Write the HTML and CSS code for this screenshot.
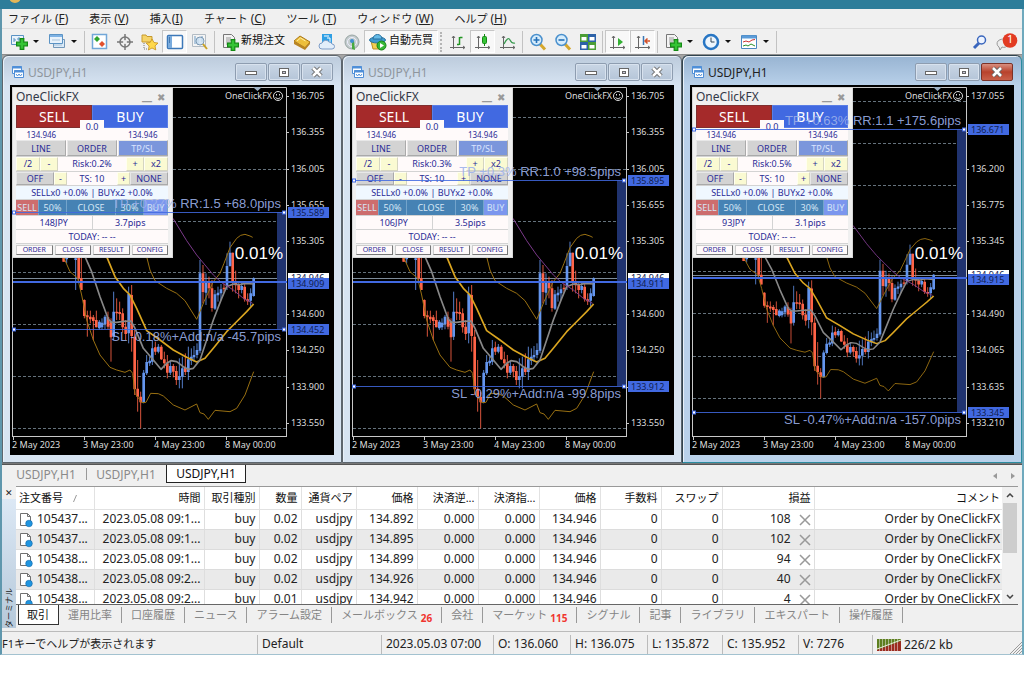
FILE: index.html
```html
<!DOCTYPE html>
<html lang="ja">
<head>
<meta charset="utf-8">
<title>USDJPY,H1</title>
<link rel="stylesheet" href="styles.css">
</head>
<body>
<svg class="defs" width="0" height="0" aria-hidden="true">
  <defs>
    <symbol id="i-plus" viewBox="0 0 10 10"><path d="M3.500.500h3v3h3v3h-3v3h-3v-3h-3v-3h3z" fill="#35c435" stroke="#138a13"/></symbol>
    <symbol id="i-newchart" viewBox="0 0 18 18"><path d="M1.500 2.500h12v9h-12z" fill="#eaf3fb" stroke="#5b93c4"/><path d="M4 5v4M4 7h2M9 4v4M7 6h4" stroke="#5b93c4"/><use href="#i-plus" x="6" y="5" width="12" height="12"/></symbol>
    <symbol id="i-profiles" viewBox="0 0 18 18"><path d="M5.500 6.500h11v8h-11z" fill="#dcebf8" stroke="#7397b8"/><path d="M1.500 1.500h13v9h-13z" fill="#e8f2fb" stroke="#5b93c4"/><path d="M2 3h12" stroke="#7eb2e4" stroke-width="2"/><path d="M4 7h8M6 12h8" stroke="#a9c3da"/></symbol>
    <symbol id="i-market" viewBox="0 0 18 18"><path d="M1.500 1.500h14v14h-14z" fill="#fff" stroke="#72a7d8" stroke-width="1.500"/><path d="m6 3 3 3-3 3-3-3z" fill="#2fa52f"/><path d="m11 8 3 3-3 3-3-3z" fill="#e2502c"/></symbol>
    <symbol id="i-cross" viewBox="0 0 18 18"><circle cx="9" cy="9" r="5" fill="none" stroke="#777" stroke-width="1.500"/><path d="M9 1v16M1 9h16" stroke="#777" stroke-width="1.500"/><circle cx="9" cy="9" r="2" fill="#eee"/></symbol>
    <symbol id="i-fav" viewBox="0 0 18 18"><path d="M1 3.500V2h4l1 1.500h5V9H1z" fill="#f6d468" stroke="#c69a2e"/><path d="M3 10v6h4" stroke="#777" stroke-dasharray="1 1" fill="none"/><path d="m11 6 2 3.500 4 .6-3 2.800.8 4L11 15l-3.600 2 .7-4-3-2.900 4-.6z" fill="#ffd84a" stroke="#c48f1a" stroke-width=".8"/></symbol>
    <symbol id="i-nav" viewBox="0 0 18 18"><rect x="1.500" y="2.500" width="15" height="13" rx="1" fill="#fff" stroke="#3c78b8" stroke-width="1.500"/><path d="M2 3h4v12H2z" fill="#79abdd"/><path d="M3 5h1M3 7h1M3 9h1" stroke="#184b83"/></symbol>
    <symbol id="i-tester" viewBox="0 0 18 18"><path d="M1.500 1.500h13v12h-13z" fill="#f4f4f4" stroke="#b3bcc4"/><path d="M4 3v8M7 5v7M11 3v6" stroke="#6f9dc6"/><circle cx="9" cy="8" r="4" fill="#cfe3f5" fill-opacity=".8" stroke="#7c99b3"/><path d="m12 11 4 5" stroke="#c9a227" stroke-width="2"/></symbol>
    <symbol id="i-order" viewBox="0 0 18 18"><path d="M2.500 1.500h8l3 3v10h-11z" fill="#f3f3f3" stroke="#777"/><path d="M5 5h5M5 7h6M5 9h4M5 11h3" stroke="#999"/><use href="#i-plus" x="6" y="6" width="12" height="12"/></symbol>
    <symbol id="i-book" viewBox="0 0 18 18"><path d="m1 8 6-5 10 6-5 6z" fill="#edbf3c" stroke="#a9771a"/><path d="m1 8 11 6 5-5v2l-5 6L1 11z" fill="#b98524"/><path d="m4 8 3.500-3 5 3" stroke="#fff0a8" fill="none"/></symbol>
    <symbol id="i-cloud" viewBox="0 0 18 18"><path d="M4 1h10v10H4z" fill="#2f9fe4"/><path d="M6 3h5M9 5h3v4" stroke="#fff" fill="none"/><path d="M4 16a3 3 0 0 1 0-6 4 4 0 0 1 7-1 3 3 0 0 1 3 2 2.500 2.500 0 0 1 0 5z" fill="#e3eefa" stroke="#7e9dc7"/></symbol>
    <symbol id="i-signal" viewBox="0 0 18 18"><circle cx="9" cy="9" r="7" fill="#c3cccc" stroke="#98a4a4"/><circle cx="9" cy="9" r="4.500" fill="none" stroke="#eef"/><path d="M9 8h2l1 9-3-1z" fill="#48aa3f"/><circle cx="9" cy="8" r="2" fill="#3f8fd0"/></symbol>
    <symbol id="i-auto" viewBox="0 0 18 18"><path d="m2 8 2 8h7l3-6z" fill="#f3ce51" stroke="#b98d25"/><ellipse cx="8.500" cy="7" rx="8" ry="3" fill="#3f9bd0" stroke="#28719f"/><path d="M4 6c0-6 9-6 9 0z" fill="#65bbe8" stroke="#28719f"/><circle cx="12.500" cy="12.500" r="4.500" fill="#37b837" stroke="#168316"/><path d="m11 10 4 2.500-4 2.500z" fill="#fff"/></symbol>
    <symbol id="i-axes" viewBox="0 0 18 18"><path d="M4.500 3v13M1 14.500h15M3 5l1.500-2L6 5M14 13l2 1.500-2 1.500" stroke="#666" fill="none"/></symbol>
    <symbol id="i-bars" viewBox="0 0 18 18"><use href="#i-axes"/><path d="M10.500 4v8M8 11.500h2M11 4.500h2.500" stroke="#229522" stroke-width="1.500"/></symbol>
    <symbol id="i-candle" viewBox="0 0 18 18"><use href="#i-axes"/><path d="M10.500 1v12" stroke="#168716"/><rect x="8.500" y="3.500" width="4" height="7" rx="1" fill="#35c435" stroke="#168716"/></symbol>
    <symbol id="i-line" viewBox="0 0 18 18"><use href="#i-axes"/><path d="M5 11q4-8 6-4t5 3" fill="none" stroke="#3a9a50" stroke-width="1.300"/></symbol>
    <symbol id="i-mag" viewBox="0 0 18 18"><path d="m11 11 5 5.500" stroke="#d5a72c" stroke-width="3"/><circle cx="7.500" cy="7" r="5.500" fill="#d6ecfb" stroke="#4a90cd" stroke-width="1.500"/></symbol>
    <symbol id="i-zin" viewBox="0 0 18 18"><use href="#i-mag"/><path d="M7.500 4v6M4.500 7h6" stroke="#2470b8" stroke-width="1.600"/></symbol>
    <symbol id="i-zout" viewBox="0 0 18 18"><use href="#i-mag"/><path d="M4.500 7h6" stroke="#2470b8" stroke-width="1.600"/></symbol>
    <symbol id="i-tile" viewBox="0 0 18 18"><path d="M1 1h8v8H1zM9 9h8v8H9z" fill="#4b9e35"/><path d="M9 1h8v8H9zM1 9h8v8H1z" fill="#2c62a8"/><path d="M2.500 4h5v3.500h-5zM10.500 4h5v3.500h-5zM2.500 12h5v3.500h-5zM10.500 12h5v3.500h-5z" fill="#fff"/></symbol>
    <symbol id="i-scroll" viewBox="0 0 18 18"><use href="#i-axes"/><path d="m9 5 5 4-5 4z" fill="#34b034"/></symbol>
    <symbol id="i-shift" viewBox="0 0 18 18"><use href="#i-axes"/><path d="M9.500 3v9" stroke="#3a77b5" stroke-width="1.500"/><path d="M11 8h5M13.500 5.500 11 8l2.500 2.500" fill="none" stroke="#d2512a" stroke-width="1.500"/></symbol>
    <symbol id="i-clock" viewBox="0 0 18 18"><circle cx="9" cy="9" r="7" fill="#eef6fd" stroke="#2876c4" stroke-width="2.500"/><path d="M9 4.500V9h3.500" stroke="#345" fill="none"/></symbol>
    <symbol id="i-tmpl" viewBox="0 0 18 18"><path d="M1.500 2.500h15v13h-15z" fill="#fff" stroke="#4a87c0"/><path d="M2 4h14" stroke="#5b9bd8" stroke-width="3"/><path d="m3 9 3-1 3 1 3-2 3-.500" stroke="#c33" fill="none"/><path d="m3 13 3-1 2 1 3-2 4 2" stroke="#2a8f2a" fill="none"/></symbol>
    <symbol id="i-search" viewBox="0 0 18 18"><path d="m3 15 5-5" stroke="#3a66bd" stroke-width="3"/><circle cx="10.500" cy="7" r="4" fill="#eef4ff" stroke="#3a66bd" stroke-width="1.500"/></symbol>
    <symbol id="i-chat" viewBox="0 0 22 18"><path d="M3 14a4 4 0 0 1-1-6c2-2 7-3 10 0v4c-1 2-4 3-6 2l-2 3z" fill="#ededed" stroke="#999"/><circle cx="14" cy="7.500" r="7.300" fill="#e23b22"/></symbol>
    <symbol id="i-win" viewBox="0 0 14 14"><path d="M1.500 1.500h9v7h-9z" fill="#fff" stroke="#4f8fd8"/><path d="M1 2.500h10" stroke="#4f8fd8" stroke-width="2"/><path d="M3.500 5.500h9v7h-9z" fill="#fff" stroke="#4f8fd8"/><path d="M3 6.500h10" stroke="#4f8fd8" stroke-width="2"/><path d="m5 9 1.500 2L8 9l1.500 2L11 9" stroke="#4f8fd8" fill="none"/></symbol>
    <symbol id="i-doc" viewBox="0 0 14 16"><path d="M1.500 1.500h7l3 3v9h-10z" fill="#fff" stroke="#707070"/><path d="M8.500 1.500v3h3" fill="none" stroke="#707070"/><circle cx="10" cy="11.500" r="3.300" fill="#1f95e0" stroke="#1268a8" stroke-width=".6"/></symbol>
    <g id="curves" fill="none" stroke-linejoin="round">
      <path id="bear-wicks" class="wick bear"/><path id="bull-wicks" class="wick bull"/>
      <path id="bear-bodies" class="body bear"/><path id="bull-bodies" class="body bull"/>
      <path class="band" d="M190 50 210 95 233 115 245 165 260 240 280 300 300 345 330 382 350 390 375 397 390 390 398 400 405 460 425 488 438 487 452 460 475 461 490 468 520 495 555 510 590 492 600 518 612 522 625 538 645 511 690 515 710 505 735 465 761 395"/>
      <path class="band" d="M440 50 450 90 465 122 500 145 530 160 555 182 590 238 600 215 612 185 640 125 660 100 672 70 690 23 710-5 722-14 735-17 750-12 758-8"/>
      <path class="slow" d="M320 50 345 110 370 145 390 165 410 205 440 272 480 300 520 330 560 352 590 366 615 355 640 325 680 275 715 240 740 215 761 192"/>
      <path class="mid" d="M255 50 275 95 300 170 325 238 335 247 350 247 370 244 393 243 405 265 430 325 460 360 483 388 500 370 513 362 530 365 550 380 565 388 580 385 600 360 615 315 640 240 665 175 680 140 700 132 720 134 735 130 760 132"/>
      <path class="long" d="M519-65 560 2 590 45 640 105 665 128 700 150 730 175 758 190"/>
    </g>
  </defs>
</svg>

<div class="app">
  <header class="titlebar"><span class="app-icon"></span></header>
  <nav class="menu" aria-label="メニュー">
    <a href="#">ファイル <span>(<u>F</u>)</span></a><a href="#">表示 <span>(<u>V</u>)</span></a><a href="#">挿入<span>(<u>I</u>)</span></a><a href="#">チャート <span>(<u>C</u>)</span></a><a href="#">ツール <span>(<u>T</u>)</span></a><a href="#">ウィンドウ <span>(<u>W</u>)</span></a><a href="#">ヘルプ <span>(<u>H</u>)</span></a>
  </nav>
  <div class="toolbar" id="toolbar"></div>
  <main class="mdi" id="mdi"></main>
  <div class="chart-tabs">
    <button>USDJPY,H1</button><button>USDJPY,H1</button><button class="active">USDJPY,H1</button>
    <span class="tab-arrows"><button aria-label="前"><svg width="4" height="6"><path d="M4 0v6L0 3z" fill="#999"/></svg></button><button aria-label="次"><svg width="4" height="6"><path d="M0 0v6l4-3z" fill="#999"/></svg></button></span>
  </div>
  <section class="terminal">
    <aside class="dock"><button aria-label="閉じる">✕</button><div class="dock-title"><span>ターミナル</span></div></aside>
    <div class="terminal-main">
      <div class="grid-wrap">
        <div class="grid-clip">
          <table>
            <colgroup><col class="w78"><col class="w110"><col class="w55"><col class="w42"><col class="w55"><col class="w61"><col class="w61"><col class="w61"><col class="w61"><col class="w61"><col class="w61"><col class="w92"><col></colgroup>
            <thead><tr><th class="left">注文番号<svg class="sort" width="4" height="7"><path d="M.500 7 3.500 0" stroke="#999"/></svg></th><th>時間</th><th>取引種別</th><th>数量</th><th>通貨ペア</th><th>価格</th><th>決済逆...</th><th>決済指...</th><th>価格</th><th>手数料</th><th>スワップ</th><th>損益</th><th>コメント</th></tr></thead>
            <tbody id="orders"></tbody>
          </table>
        </div>
        <div class="scroll"><button aria-label="上へ"><svg width="8" height="5"><path d="m1 4 3-3 3 3"/></svg></button><div class="thumb"></div><button aria-label="下へ"><svg width="8" height="5"><path d="m1 1 3 3 3-3"/></svg></button></div>
      </div>
      <div class="term-tabs"><button class="active">取引</button><button>運用比率</button><button>口座履歴</button><button>ニュース</button><button>アラーム設定</button><button>メールボックス<sub>26</sub></button><button>会社</button><button>マーケット<sub>115</sub></button><button>シグナル</button><button>記事</button><button>ライブラリ</button><button>エキスパート</button><button>操作履歴</button></div>
    </div>
  </section>
  <footer class="status">
    <span class="message">F1キーでヘルプが表示されます</span><span class="w124">Default</span><span class="w112">2023.05.03 07:00</span><span class="w77">O: 136.060</span><span class="w77">H: 136.075</span><span class="w75">L: 135.872</span><span class="w76">C: 135.952</span><span class="w74">V: 7276</span>
    <span class="net"><svg width="24" height="12"><path d="M0 0h24v12H0z" fill="#5d7f1f"/><path d="m0 11 24-9v10H0z" fill="#9c2b1f"/><path d="m0 10 24-9" stroke="#e9ecd8"/><path d="M2.500 0v12M5.500 0v12M8.500 0v12M11.500 0v12M14.500 0v12M17.500 0v12M20.500 0v12" stroke="#efefef" stroke-opacity=".5"/></svg>226/2 kb</span>
    <svg class="grip-corner" width="12" height="12"><path d="M0 12 12 0M3 12l9-9M6 12l6-6M9 12l3-3" stroke="#9a9a9a"/></svg>
  </footer>
</div>
<script src="script.js"></script>
</body>
</html>
```

FILE: styles.css
```css
* { box-sizing: border-box; }
body { margin: 0; background: #fff; color: #222; font: 12px "Noto Sans", "Noto Sans CJK JP", sans-serif; }
button { margin: 0; padding: 0; border: 0; background: none; font: inherit; color: inherit; }
a { color: inherit; text-decoration: none; }
.defs { position: absolute; }
.app { border-left: 2px solid #5f97ad; border-right: 2px solid #6fa9bd; border-bottom: 1px solid #a3c2d0; background: #f0f0f0; }

.titlebar { height: 9px; margin: 0 -2px; padding-left: 9px; background: #2d7d9a; overflow: hidden; }
.app-icon { display: block; width: 12px; height: 12px; margin-top: -9px; border-radius: 6px; background: #e3b658; }
.menu { display: flex; gap: 21px; height: 20px; padding-left: 6px; line-height: 19px; font-size: 11px; white-space: nowrap; border-bottom: 1px solid #dcdcdc; }
.menu span { font-size: 12px; }

.toolbar { display: flex; align-items: center; height: 26px; padding-left: 4px; border-bottom: 1px solid #8e8e8e; font-size: 11px; }
.toolbar button { display: flex; align-items: center; justify-content: center; width: 25px; height: 23px; }
.toolbar .drop { width: 36px; margin-right: 2px; }
.toolbar .drop::after { content: ""; margin-left: 5px; border: 3px solid transparent; border-top-color: #111; border-bottom: 0; }
.toolbar .wide { width: auto; padding: 0 4px; gap: 2px; }
.toolbar .pressed { background: #f8f8f8; border: 1px solid #c6c6c6; border-right-color: #fff; border-bottom-color: #fff; }
.toolbar svg { width: 18px; height: 18px; flex: none; }
.toolbar .label { display: block; line-height: 14px; padding-bottom: 3px; white-space: nowrap; color: #111; }
.toolbar .sep { width: 1px; height: 22px; margin: 0 2px; background: #c2c2c2; }
.toolbar .grip { width: 3px; height: 20px; margin: 0 2px; border-left: 2px dotted #b5b5b5; }
.toolbar .spacer { flex: 1; }
.toolbar .chat { position: relative; width: 30px; }
.toolbar .chat svg { width: 22px; }
.toolbar .chat b { position: absolute; left: 15px; top: 2px; color: #fff; font-weight: 400; font-size: 11px; line-height: 14px; }

.mdi { display: grid; grid-template-columns: repeat(3, 1fr); background: #a4a4a4; border-bottom: 1px solid #777; }
.win { border: 1px solid #5d666e; border-radius: 6px 6px 0 0; padding: 0 7px 7px; background: linear-gradient(#bccbdc, #d7e4f2 30px); box-shadow: inset 1px 1px #e8f0f8; }
.win.active { background: linear-gradient(#98b4d2, #b9d1ea 30px); border-color: #31444f; border-right-color: #2a8ca0; border-bottom-color: #2a8ca0; }
.win-bar { display: flex; align-items: center; height: 29px; padding: 3px 1px 0 1px; color: #8f969d; }
.win.active .win-bar { color: #222; }
.win-bar svg { margin-right: 3px; }
.win-bar .name { flex: 1; }
.win-bar button { display: flex; align-items: center; justify-content: center; width: 32px; height: 18px; margin-left: 1px; border: 1px solid #8e9db0; border-radius: 2px; background: linear-gradient(#c9d6e5, #b5c5d8); box-shadow: inset 0 0 0 1px #d8e2ee; }
.win-bar button svg { margin: 0; }
.win.active .win-bar .close { background: linear-gradient(#d98f80, #b8422c 50%, #c8604a); border-color: #7c3227; box-shadow: none; }

.chart { position: relative; background: #000; }
.chart > svg { display: block; width: 100%; height: auto; }
.chart > .overlay { position: absolute; inset: 0; pointer-events: none; }
.chart text { font-family: "Noto Sans", sans-serif; font-size: 9px; fill: #dcdcdc; }
.chart .note { font-family: "Liberation Sans", Arial, sans-serif; font-size: 13px; fill: #9db1ea; fill-opacity: .9; }
.chart .pct { font-family: "Liberation Sans", Arial, sans-serif; font-size: 17px; fill: #fff; }
.chart .tag { fill: #10204f; }
.frame { fill: none; stroke: #c8c8c8; }
.gridline { stroke: #65727c; stroke-dasharray: 3 2; }
.bear { stroke: #ff6347; }
.bull { stroke: #6495ed; }
.wick { stroke-width: 3; stroke-opacity: .85; }
.body { stroke-width: 8; }
.band { stroke: #9a7012; stroke-width: 3; }
.slow { stroke: #daa520; stroke-width: 5; }
.mid { stroke: #888; stroke-width: 5; }
.long { stroke: #7c3a8c; stroke-width: 3; }

.panel { position: absolute; left: 2px; top: 2px; width: 161px; padding: 0 4px 2px 3px; background: #f0f0f0; border: 1px solid #d8d8d8; color: #2a2a96; font-size: 9px; line-height: 13px; text-align: center; }
.panel header { display: flex; height: 17px; align-items: center; color: #333847; font-size: 12px; }
.panel header span { flex: 1; text-align: left; }
.panel header button { width: 14px; color: #999; font-size: 10px; line-height: 12px; }
.row { display: flex; background: #fffafa; border-bottom: 1px solid #d3d3d3; }
.row > * { flex: 1; }
.trade { position: relative; border: 0; }
.trade button { height: 23px; color: #fff; font-size: 14px; line-height: 21px; border: 1px solid; }
.trade .sell { background: #a52a2a; border-color: #7f3030; }
.trade .buy { background: #4169e1; border-color: #5a7ee6; }
.trade .spread { position: absolute; left: 64px; top: 15px; width: 24px; height: 18px; background: #fffafa; }
.quotes { height: 12px; border: 0; font-size: 8px; line-height: 13px; }
.modes { gap: 1px; height: 17px; }
.modes button, .trail .g { background: #d3d3d3; border: 1px solid; border-color: #e8e8e8 #aaa #aaa #e8e8e8; }
.modes .on { background: #7b96dc; color: #dbe4ff; }
.risk { height: 15px; }
.risk button, .trail .y { flex: 0 0 24px; background: #fafad2; border: 1px solid; border-color: #fffff0 #d5d5c0 #d5d5c0 #fffff0; line-height: 12px; }
.risk .s { flex-basis: 18px; }
.trail { height: 14px; }
.trail button { line-height: 11px; }
.trail .g { flex: 0 0 38px; }
.trail .y { flex: 0 0 13px; }
.sum { height: 14px; background: #f0f8ff; white-space: nowrap; }
.closing { height: 16px; background: #4682b4; }
.closing button { flex: 1; color: #d5e6f5; border-right: 1px solid #74a4cb; }
.closing .r { flex: 0 0 23px; background: #cd6d6d; }
.closing .m { flex: 0 0 28px; }
.closing .b { flex: 0 0 24px; background: #7b96ee; }
.result { height: 14px; }
.result span + span { border-left: 1px solid #d3d3d3; }
.foot { gap: 2px; border: 0; background: none; padding-top: 1px; }
.foot button { height: 10px; background: #fffafa; border: 1px solid; border-color: #ccc #777 #777 #ccc; font-size: 7px; line-height: 8px; }

.chart-tabs { display: flex; height: 19px; border-top: 1px solid #555; padding-left: 4px; color: #8a8a8a; }
.chart-tabs > button { position: relative; width: 80px; height: 18px; line-height: 17px; }
.chart-tabs > button:first-child::after { content: ""; position: absolute; right: -1px; top: 3px; height: 12px; border-right: 1px solid #999; }
.chart-tabs > .active { background: #fff; border: 1px solid #222; border-top: 0; color: #111; }
.tab-arrows { margin-left: auto; display: flex; gap: 14px; padding-right: 7px; }

.terminal { display: flex; margin-top: 3px; }
.dock { width: 14px; display: flex; flex-direction: column; }
.dock button { height: 13px; color: #222; font-size: 9px; line-height: 11px; }
.dock-title { flex: 1; display: flex; align-items: flex-end; background: linear-gradient(#dce8f5, #b6c9da); }
.dock-title span { writing-mode: vertical-rl; text-orientation: sideways; transform: rotate(180deg); white-space: nowrap; font-size: 8px; line-height: 14px; }
.terminal-main { flex: 1; min-width: 0; }
.grid-wrap { display: flex; height: 119px; border-top: 1px solid #999; border-bottom: 1px solid #666; margin-right: 4px; background: #fff; }
.grid-clip { flex: 1; min-width: 0; overflow: hidden; }
table { width: 100%; table-layout: fixed; border-collapse: collapse; white-space: nowrap; }
th, td { height: 20px; padding: 0 3px; border-right: 1px solid #dedede; border-bottom: 1px solid #dcdcdc; text-align: right; line-height: 18px; overflow: hidden; }
th { height: 22px; font-size: 11px; font-weight: 400; color: #111; border-color: #e2e2e2; }
th:last-child, td:last-child { padding-right: 2px; border-right: 0; }
.left { text-align: left; }
.sort { margin-left: 10px; }
td svg { display: inline-block; vertical-align: middle; }
td.left svg { margin-right: 4px; }
tbody tr:nth-child(even) { background: #eaeaea; }
.x { margin-left: 8px; height: 16px; line-height: 16px; }
.w78 { width: 78px; } .w110 { width: 110px; } .w55 { width: 55px; } .w42 { width: 42px; } .w61 { width: 61px; } .w92 { width: 92px; }
.scroll { width: 16px; display: flex; flex-direction: column; align-items: stretch; background: #f0f0f0; }
.scroll button { display: flex; justify-content: center; align-items: center; height: 16px; }
.scroll path { fill: none; stroke: #444; stroke-width: 1.5; }
.thumb { height: 50px; margin: 0 1px; background: #cdcdcd; }
.scroll button:last-child { margin-top: auto; }
.term-tabs { display: flex; height: 23px; padding-left: 2px; font-size: 11px; color: #858585; white-space: nowrap; }
.term-tabs button { position: relative; height: 20px; padding: 0 10px 0 9px; line-height: 18px; }
.term-tabs button::after { content: ""; position: absolute; right: 0; top: 2px; height: 16px; border-right: 1px solid #999; }
.term-tabs .active { padding: 0 9px 0 8px; background: #fff; border: 1px solid #333; border-top: 0; color: #111; }
.term-tabs .active::after { display: none; }
.term-tabs sub { margin-left: 3px; color: #f0352f; font-size: 10px; font-weight: 700; line-height: 8px; }

.status { display: flex; height: 23px; padding-top: 3px; border-top: 1px solid #bbb; margin-top: 3px; position: relative; white-space: nowrap; }
.status > span { padding-left: 4px; border-left: 1px solid #bbb; line-height: 17px; }
.status .message { width: 255px; padding: 0; border: 0; font-size: 11px; }
.w124 { width: 124px; } .w112 { width: 112px; } .w77 { width: 77px; } .w75 { width: 75px; } .w76 { width: 76px; } .w74 { width: 74px; }
.net { display: flex; align-items: center; gap: 3px; }
.grip-corner { position: absolute; right: 0; bottom: 0; }
```

FILE: script.js
```js
const icon = (id, w = 18, h = 18) => `<svg width="${w}" height="${h}" aria-hidden="true"><use href="#i-${id}"/></svg>`;

/* toolbar: name, icon, kind, caption */
const tools = [
  ['新規チャート', 'newchart', 'drop'], ['プロファイル', 'profiles', 'drop'], '|',
  ['気配値', 'market'], ['十字カーソル', 'cross'], ['お気に入り', 'fav'], ['ナビゲーター', 'nav', 'pressed'], ['テスター', 'tester'], '|',
  ['新規注文', 'order', 'wide', '新規注文'], ['エディタ', 'book'], ['クラウド', 'cloud'], ['シグナル', 'signal'],
  ['自動売買', 'auto', 'wide pressed', '自動売買'], ':',
  ['バー', 'bars'], ['ローソク足', 'candle', 'pressed'], ['ライン', 'line'], '|',
  ['拡大', 'zin'], ['縮小', 'zout'], ['整列', 'tile'], '|',
  ['自動スクロール', 'scroll', 'pressed'], ['シフト', 'shift', 'pressed'], '|',
  ['インディケータ', 'order', 'drop'], ['時間足', 'clock', 'drop'], ['定型チャート', 'tmpl', 'drop'], '|'
];
document.getElementById('toolbar').innerHTML = tools.map(t =>
  t === '|' ? '<span class="sep"></span>' : t === ':' ? '<span class="grip"></span>' :
  `<button class="${t[2] || ''}" aria-label="${t[0]}">${icon(t[1])}${t[3] ? `<span class="label">${t[3]}</span>` : ''}</button>`
).join('') + `<span class="spacer"></span><button aria-label="検索">${icon('search')}</button><button class="chat" aria-label="通知">${icon('chat', 22)}<b>1</b></button>`;

/* candles: x, high, low, body top, body bottom, bull flag */
const candles = [
  [191,40,65,52,65,0],[200,40,70,52,58,1],[227,50,150,55,60,1],[236,50,125,50,115,0],[244,52,150,115,150,0],
  [253,178,235,180,228,0],[262,212,290,226,232,0],[271,212,250,230,238,0],[280,225,300,232,243,0],[289,212,262,240,262,0],
  [298,240,270,245,265,1],[306,235,270,248,262,1],[315,225,268,230,252,1],[324,215,268,232,260,0],[333,235,365,245,292,0],
  [341,155,300,215,290,1],[350,175,240,215,220,0],[359,185,240,216,222,0],[368,205,278,220,262,0],[377,240,300,260,282,0],
  [386,140,310,162,280,1],[395,135,335,165,288,0],[404,270,465,290,448,0],[413,360,515,446,470,0],[422,455,565,470,487,0],
  [431,390,490,398,488,1],[440,345,405,366,400,1],[449,350,378,362,370,1],[457,300,375,325,365,1],[466,305,345,322,335,0],
  [475,312,340,320,335,1],[484,315,360,320,358,0],[493,335,385,358,370,0],[502,345,415,370,398,0],[511,360,405,378,398,1],
  [520,372,412,378,395,0],[529,378,435,393,420,0],[538,355,445,408,420,1],[547,350,445,385,410,1],[556,340,405,384,396,0],
  [565,320,420,358,396,1],[574,325,375,350,362,1],[582,318,365,345,352,1],[591,310,355,330,345,1],[600,60,340,100,332,1],
  [609,75,190,100,156,0],[618,100,195,125,158,1],[627,110,175,125,145,0],[636,120,215,145,204,0],[645,150,210,163,206,1],
  [654,140,185,158,166,1],[663,132,180,148,160,1],[672,130,158,143,148,0],[681,40,150,78,138,1],[690,5,80,38,78,1],
  [698,38,155,38,125,0],[707,92,160,128,136,0],[716,130,175,135,150,0],[725,125,160,138,150,1],[734,130,185,140,178,0],
  [743,160,195,178,184,0],[752,145,200,160,182,1],[761,112,170,115,168,1]
];
const path = (bull, a, b) => candles.filter(c => c[5] === bull).map(c => `M${c[0]} ${c[a]}V${c[b]}`).join('');
[['bear', 0], ['bull', 1]].forEach(([n, f]) => {
  document.getElementById(n + '-wicks').setAttribute('d', path(f, 1, 2));
  document.getElementById(n + '-bodies').setAttribute('d', path(f, 3, 4));
});

const rowsY = [11, 47, 84, 120, 156, 193, 229, 265, 302, 338];
const standard = ['136.705', '136.355', '136.005', '135.655', '135.305', '', '134.600', '134.250', '133.900', '133.550'];
const charts = [
  { labels: standard, grid: [32, 84, 136, 187, 239, 291, 343], map: '1 0 0 1 0 0', risk: '0.2%', jpy: '148JPY', pips: '3.7pips',
    tp: [127, 'TP +0.27% RR:1.5 +68.0pips', '135.589'], sl: [244, 'SL -0.18%+Add:n/a -45.7pips', '134.452'], now: [193, 197, '134.909'] },
  { labels: standard, grid: [32, 84, 136, 187, 239, 291, 343], map: '1 0 0 1 0 0', risk: '0.3%', jpy: '106JPY', pips: '3.5pips',
    tp: [95, 'TP +0.3% RR:1.0 +98.5pips', '135.895'], sl: [301, 'SL -0.29%+Add:n/a -99.8pips', '133.912'], now: [193, 197, '134.911'] },
  { labels: ['137.055', '136.630', '136.200', '135.775', '135.345', '', '134.490', '134.065', '133.635', '133.210'],
    grid: [16, 58, 100, 143, 186, 228, 271, 313], map: '1 0 0 .8235 0 30.6', risk: '0.5%', jpy: '93JPY', pips: '3.1pips', active: true,
    tp: [44, 'TP +0.63% RR:1.1 +175.6pips', '136.671'], sl: [327, 'SL -0.47%+Add:n/a -157.0pips', '133.345'], now: [190, 193, '134.915'] }
];

const tag = (y, t) => `<rect x="278" y="${y - 5}" width="41" height="11" fill="#4169e1"/><text class="tag" x="281" y="${y + 4}">${t}</text>`;
const handle = (x, y) => `<rect x="${x - 1.5}" y="${y - 1}" width="3" height="3" fill="#fff" stroke="#4169e1"/>`;

const plot = c => `<svg viewBox="0 0 324 370">
  <path class="frame" d="M2.500 352V2.500h274V352M2 351.500h275"/>
  ${c.grid.map(y => `<path class="gridline" d="M3 ${y}.500h273"/>`).join('')}
  <path d="M3 ${c.now[0]}.500h273" stroke="#7d8b99"/>
  <g transform="matrix(${c.map})"><use href="#curves" transform="translate(-10 155) scale(.33333)"/></g>
  <path d="M3 ${c.now[1]}h274" stroke="#4169e1" stroke-width="2"/>
  <path d="M243 2h9l-4.500 4z" fill="#9db0c4"/>
  <text x="215" y="14">OneClickFX</text>
  <g fill="none" stroke="#ddd"><circle cx="268" cy="11" r="4.500"/><path d="M265.500 12.500q2.500 3 5 0M266.500 9v1.500M269.500 9v1.500"/></g>
  ${c.labels.map((l, i) => l ? `<path d="M277 ${rowsY[i]}.500h2" stroke="#c8c8c8"/><text x="281" y="${rowsY[i] + 3}">${l}</text>` : '').join('')}
  ${['2 May 2023', '3 May 23:00', '4 May 23:00', '8 May 00:00'].map((l, i) => `<path d="M${3 + i * 71}.500 352v3" stroke="#c8c8c8"/><text x="${2 + i * 71}" y="363">${l}</text>`).join('')}
  <rect x="278" y="${c.now[0] - 5}" width="41" height="9" fill="#fff"/><text class="tag" x="281" y="${c.now[0] + 3}">134.946</text>
  ${tag(c.now[1] + 1, c.now[2])}
</svg>`;

const overlay = c => `<svg class="overlay" viewBox="0 0 324 370">
  <rect x="267" y="${c.tp[0]}" width="9" height="${c.sl[0] - c.tp[0]}" fill="#20336f"/>
  <path d="M267 ${c.now[1]}h10" stroke="#4169e1" stroke-width="2"/>
  ${[c.tp, c.sl].map((o, i) => `<path d="M4 ${o[0]}.500h270" stroke="#4169e1" stroke-opacity=".85"/>${handle(4, o[0])}${handle(274, o[0])}
    <text class="note" text-anchor="end" x="271" y="${o[0] + (i ? 12 : -4)}">${o[1]}</text>${tag(o[0], o[2])}`).join('')}
  <text class="pct" text-anchor="end" x="273" y="174">0.01%</text>
</svg>`;

const panel = c => `<div class="panel">
  <header><span>OneClickFX</span><button aria-label="最小化">▁</button><button aria-label="閉じる">✖</button></header>
  <div class="row trade"><button class="sell">SELL</button><button class="buy">BUY</button><span class="spread">0.0</span></div>
  <div class="row quotes"><span>134.946</span><span></span><span>134.946</span></div>
  <div class="row modes"><button>LINE</button><button>ORDER</button><button class="on">TP/SL</button></div>
  <div class="row risk"><button>/2</button><button class="s">-</button><span>Risk:${c.risk}</span><button class="s">+</button><button>x2</button></div>
  <div class="row trail"><button class="g">OFF</button><button class="y">-</button><span>TS: 10</span><button class="y">+</button><button class="g">NONE</button></div>
  <div class="row sum"><span>SELLx0 +0.0% | BUYx2 +0.0%</span></div>
  <div class="row closing"><button class="r">SELL</button><button class="m">50%</button><button>CLOSE</button><button class="m">30%</button><button class="b">BUY</button></div>
  <div class="row result"><span>${c.jpy}</span><span>${c.pips}</span></div>
  <div class="row result"><span>TODAY: -- --</span></div>
  <div class="row foot"><button>ORDER</button><button>CLOSE</button><button>RESULT</button><button>CONFIG</button></div>
</div>`;

document.getElementById('mdi').innerHTML = charts.map(c => `<section class="win ${c.active ? 'active' : ''}">
  <div class="win-bar">${icon('win', 14, 14)}<span class="name">USDJPY,H1</span>
    <button aria-label="最小化"><svg width="14" height="12"><rect x="1.500" y="5.500" width="11" height="3" fill="#fff" stroke="#666"/></svg></button>
    <button aria-label="最大化"><svg width="12" height="11"><rect x="1.500" y="1.500" width="9" height="8" fill="#fff" stroke="#666"/><rect x="4.500" y="4.500" width="3" height="2" fill="#ccd" stroke="#666"/></svg></button>
    <button class="close" aria-label="閉じる"><svg width="14" height="12"><path d="m3 2 8 8M11 2l-8 8" stroke="#666" stroke-width="4.500"/><path d="m3 2 8 8M11 2l-8 8" stroke="#fff" stroke-width="2.500"/></svg></button>
  </div>
  <div class="chart">${plot(c)}${panel(c)}${overlay(c)}</div>
</section>`).join('');

const orders = [
  ['105437...', '09:1...', '0.02', '134.892', 108], ['105437...', '09:1...', '0.02', '134.895', 102], ['105438...', '09:1...', '0.02', '134.899', 94],
  ['105438...', '09:2...', '0.02', '134.926', 40], ['105438...', '09:2...', '0.01', '134.942', 4]
];
document.getElementById('orders').innerHTML = orders.map(o => `<tr><td class="left">${icon('doc', 14, 16)}${o[0]}</td><td>2023.05.08 ${o[1]}</td><td>buy</td><td>${o[2]}</td><td>usdjpy</td><td>${o[3]}</td><td>0.000</td><td>0.000</td><td>134.946</td><td>0</td><td>0</td>
  <td>${o[4]}<button class="x" aria-label="決済"><svg width="12" height="12"><path d="m1 1 10 10M11 1 1 11" stroke="#999" stroke-width="1.500"/></svg></button></td><td>Order by OneClickFX</td></tr>`).join('');
```
